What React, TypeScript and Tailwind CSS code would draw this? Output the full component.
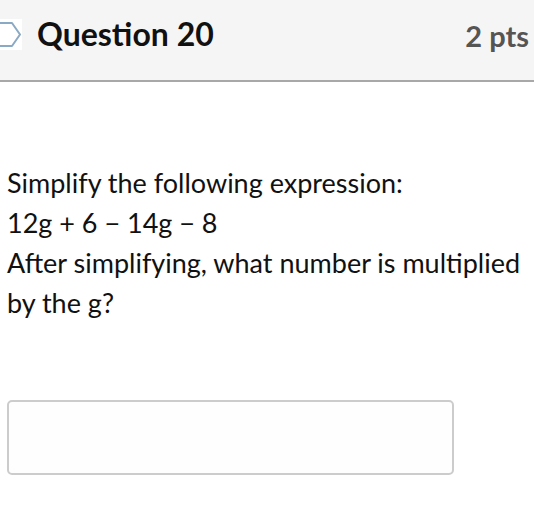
import React from "react";

export default function App() {
  return (
    <div className="w-[534px] h-[520px] bg-white overflow-hidden" style={{ fontFamily: "Lato, 'Noto Sans', sans-serif" }}>
      <div className="h-[82px] bg-[#f5f5f5] border-b-2 border-[#a8a8a8] flex items-start justify-between pr-[5px]">
        <div className="flex items-start mt-[19px]">
          <div className="w-[22px] h-[31px] bg-white flex items-center">
            <svg width="22" height="31" viewBox="0 0 22 31">
              <path d="M-4 4 L12 4 L20 15.5 L12 27 L-4 27" fill="none" stroke="#8aa9c4" strokeWidth="2" strokeLinejoin="round" />
            </svg>
          </div>
          <div className="ml-[15px] mt-[-1px] text-[32px] font-bold text-[#111] leading-[32px]">Question 20</div>
        </div>
        <div className="mt-[20px] text-[29px] font-bold text-[#555] leading-[32px]">2 pts</div>
      </div>
      <div className="pl-[7px] pt-[81px] text-[27px] leading-[40px] text-[#111]">
        <p>Simplify the following expression:</p>
        <p>12g + 6 − 14g − 8</p>
        <p>After simplifying, what number is multiplied by the g?</p>
      </div>
      <div className="pl-[7px] pt-[77px]">
        <div className="w-[447px] h-[75px] border-2 border-[#cccccc] rounded-[5px] bg-[#fefefe]" />
      </div>
    </div>
  );
}
